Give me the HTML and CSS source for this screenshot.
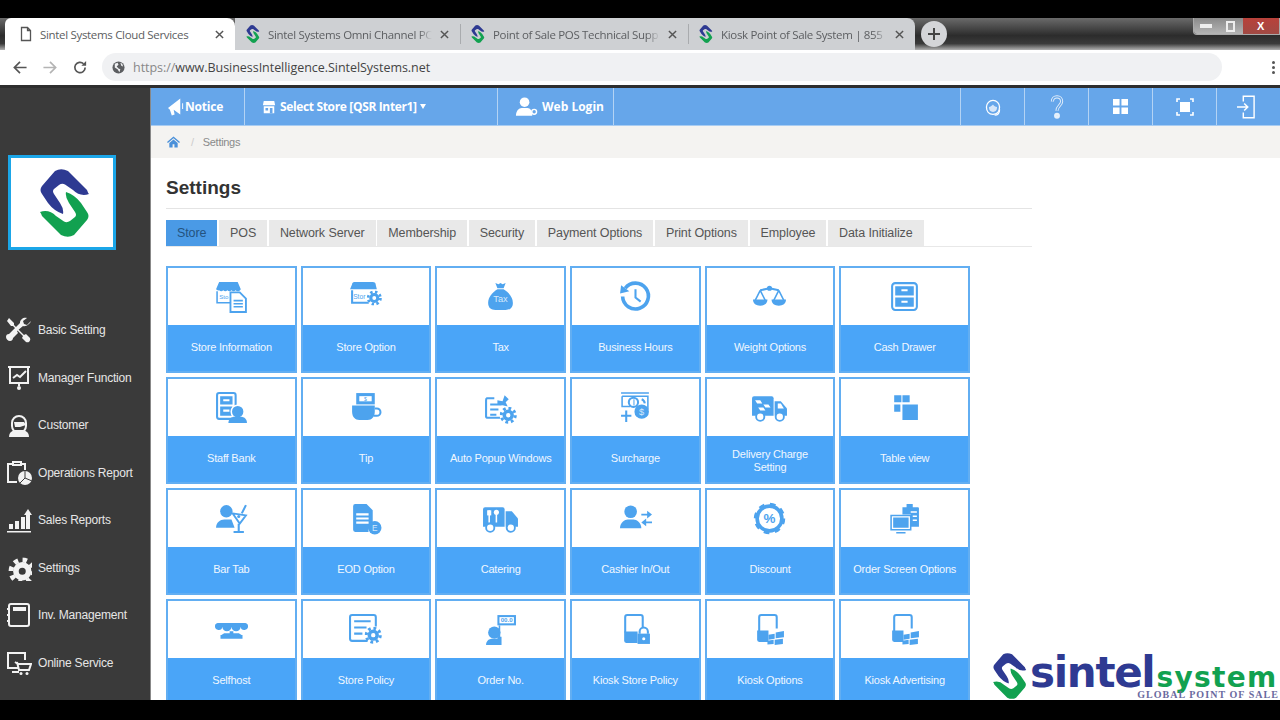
FILE: index.html
```html
<!DOCTYPE html>
<html lang="en">
<head>
    <meta charset="UTF-8">
    <meta name="viewport" content="width=device-width, initial-scale=1.0">
    <title>Sintel Systems Cloud Services</title>
    <link rel="stylesheet" href="styles.css">
</head>
<body>
    <svg class="sprite" xmlns="http://www.w3.org/2000/svg">
        <symbol id="s-mark" viewBox="0 0 50 68">
            <path fill="#2e3a92" d="M15 2Q21-1.500 28 2L47 21Q48 24 49 25 40 28 33 21L25 15.500Q22 14 19 16L14 20Q12 22 14 25L20 34Q24 40 23 45 14 42 8 34L2 25Q-1 21 2 17Z"/>
            <path fill="#12a150" d="M34 66Q28 69.500 21 66L2 47Q1 44 0 43 9 40 16 47L24 52.500Q27 54 30 52L35 48Q37 46 35 43L29 34Q25 28 26 23 35 26 41 34L47 43Q50 47 47 51Z"/>
        </symbol>
        <symbol id="gear" viewBox="0 0 20 20">
            <circle class="gear-core" cx="10" cy="10" r="4.500"/>
            <circle class="gear-teeth" cx="10" cy="10" r="8"/>
        </symbol>
        <symbol id="windows-phone" viewBox="0 0 32 32">
            <path class="ln" d="M6 18V4a2 2 0 0 1 2-2h13a2 2 0 0 1 2 2v11"/>
            <path d="M4 17h11v11H6a2 2 0 0 1-2-2z"/>
            <path d="M15 21l6-1v5l-6 1zM22 19l8-1.500v6l-8 1zM14 27l6-1v4l-6 .5zM21 26l8-1v5l-8 1z"/>
        </symbol>
    </svg>

    <div class="topbar"></div>

    <div class="tabstrip">
        <div class="tab tab-active">
            <svg class="tab-icon" viewBox="0 0 14 16"><path class="doc-ln" d="M2.500 1.500h6l3 3v10h-9zM8.500 1.500v3h3"/></svg>
            <span class="tab-title">Sintel Systems Cloud Services</span>
            <svg class="tab-close" viewBox="0 0 10 10"><path d="M1 1l8 8M9 1l-8 8"/></svg>
        </div>
        <div class="tab">
            <svg class="tab-icon"><use href="#s-mark"/></svg>
            <span class="tab-title">Sintel Systems Omni Channel PC</span>
            <svg class="tab-close" viewBox="0 0 10 10"><path d="M1 1l8 8M9 1l-8 8"/></svg>
        </div>
        <div class="tab tab-sep">
            <svg class="tab-icon"><use href="#s-mark"/></svg>
            <span class="tab-title">Point of Sale POS Technical Supp</span>
            <svg class="tab-close" viewBox="0 0 10 10"><path d="M1 1l8 8M9 1l-8 8"/></svg>
        </div>
        <div class="tab tab-sep">
            <svg class="tab-icon"><use href="#s-mark"/></svg>
            <span class="tab-title">Kiosk Point of Sale System | 855</span>
            <svg class="tab-close" viewBox="0 0 10 10"><path d="M1 1l8 8M9 1l-8 8"/></svg>
        </div>
        <div class="newtab">
            <svg viewBox="0 0 12 12"><path d="M6 0v12M0 6h12"/></svg>
        </div>
        <div class="winctl">
            <span class="win-btn"><i class="win-min"></i></span>
            <span class="win-btn"><i class="win-max"></i></span>
            <span class="win-btn win-close">X</span>
        </div>
    </div>

    <div class="toolbar">
        <svg class="tool-btn" viewBox="0 0 16 16"><path d="M15 8H2M8 2L2 8l6 6"/></svg>
        <svg class="tool-btn tool-off" viewBox="0 0 16 16"><path d="M1 8h13M8 2l6 6-6 6"/></svg>
        <svg class="tool-btn" viewBox="0 0 16 16"><path d="M13.500 8a5.500 5.500 0 1 1-1.700-4"/><path class="tool-fill" d="M14.500 1v5h-5z"/></svg>
        <div class="omnibox">
            <svg class="globe" viewBox="0 0 14 14"><circle cx="7" cy="7" r="6.500"/><path fill="#f0f1f3" d="M3 3l3-1 1 2-2 2 2 2 2 1-1 3-2-3-3-2zM9 2l2 1 1 3-2-1z"/></svg>
            <span class="url"><span class="url-scheme">https://</span>www.BusinessIntelligence.SintelSystems.net</span>
        </div>
        <div class="kebab"><i></i><i></i><i></i></div>
    </div>

    <div class="app">
        <aside class="sidebar">
            <div class="side-logo"><svg><use href="#s-mark"/></svg></div>
            <ul class="side-menu">
                <li>
                    <svg viewBox="0 0 26 26"><path d="M3 1l5 5 0 2 10 10 2-1 4 4a3 3 0 0 1-4 4l-4-4 1-2L7 9H5L1 4z"/><path d="M25 4l-4 4-3-1-1-3 4-3c-3-1-7 1-7 5l-11 11c-2 0-3 1-3 3s2 4 4 4 3-2 3-3l5-5-1-2 6-5c3 1 7-2 8-5z"/></svg>
                    <span>Basic Setting</span>
                </li>
                <li>
                    <svg viewBox="0 0 26 26"><path class="ln" d="M2 2h22M4 2v16h18V2M13 18v3"/><circle cx="13" cy="23" r="2"/><path class="ln" d="M7 13l4-3 3 2 6-6"/></svg>
                    <span>Manager Function</span>
                </li>
                <li>
                    <svg viewBox="0 0 26 26"><path class="ln" d="M6 11a7 7 0 0 1 14 0v3a7 7 0 0 1-14 0z"/><path d="M8 10h10l2 3-6 2H9z"/><path d="M3 25c0-5 4-7 7-7h6c3 0 7 2 7 7z"/></svg>
                    <span>Customer</span>
                </li>
                <li>
                    <svg viewBox="0 0 26 26"><path class="ln" d="M7 4H2v18h9M15 4h4v6"/><path class="ln" d="M7 5V2h8v3z"/><circle cx="19" cy="18" r="7"/><path class="pie-cut" d="M19 18v-8M19 18l7 3M19 18l-5 5"/></svg>
                    <span>Operations Report</span>
                </li>
                <li>
                    <svg viewBox="0 0 26 26"><path d="M3 17h4v5H3zM9 14h4v8H9zM15 10h4v12h-4zM22 2l-4 6h8z"/><path d="M20 8h4v14h-4z"/><rect x="1" y="24" width="24" height="1.500"/></svg>
                    <span>Sales Reports</span>
                </li>
                <li>
                    <svg viewBox="0 0 24 24"><svg x="2" y="2" width="20" height="20" viewBox="0 0 20 20"><use href="#gear"/></svg></svg>
                    <span>Settings</span>
                </li>
                <li>
                    <svg viewBox="0 0 26 26"><rect class="ln" x="3" y="2" width="20" height="22" rx="2"/><rect x="7" y="5" width="13" height="4"/><path class="ln" d="M1 7h3M1 13h3M1 19h3"/></svg>
                    <span>Inv. Management</span>
                </li>
                <li>
                    <svg viewBox="0 0 26 26"><path class="ln" d="M12 18H2V3h17v7M6 22h7"/><path class="ln" d="M9 12l3 2h13l-2 6H13l-2-8"/><circle cx="15" cy="23.500" r="1.500"/><circle cx="21" cy="23.500" r="1.500"/></svg>
                    <span>Online Service</span>
                </li>
            </ul>
        </aside>

        <main class="main">
            <nav class="topnav">
                <a class="nav-item nav-notice">
                    <svg viewBox="0 0 18 20"><path d="M0 11L13 1v17L6 13l1 5-3 1-2-6z"/><path d="M15 6v6h1V6z"/></svg>
                    <span>Notice</span>
                </a>
                <a class="nav-item nav-store">
                    <svg viewBox="0 0 16 16"><path d="M2 1h12l1 5H1zM2 7h12v8H2z"/><path class="nav-cut" d="M4 9h3v3H4zM9 9h3v6H9z"/></svg>
                    <span>Select Store [QSR Inter1]</span>
                    <i class="caret"></i>
                </a>
                <a class="nav-item nav-login">
                    <svg viewBox="0 0 24 20"><circle cx="10" cy="5" r="5"/><path d="M1 19c0-5 3-8 6-8h6c3 0 5 3 5 8z"/><circle class="nav-ring" cx="20" cy="15" r="2.500"/></svg>
                    <span>Web Login</span>
                </a>
                <div class="nav-right">
                    <a class="nav-icon"><svg viewBox="0 0 22 26"><path class="nav-ln" d="M3 13a8 8 0 1 1 16 0c0 5-3 9-8 9s-8-4-8-9z"/><path d="M6 13c2 0 4-2 5-3 1 2 3 3 5 3 0 4-2 6-5 6s-5-2-5-6z" class="nav-soft"/><path class="nav-ln" d="M19 16c0 6-3 7-6 7"/></svg></a>
                    <a class="nav-icon"><svg viewBox="0 0 16 26"><path class="nav-q" d="M3 7c0-3 2-5 5-5s5 2 5 5c0 4-5 5-5 10"/><circle class="nav-q" cx="8" cy="22.500" r="1.500"/><path class="nav-q-in" d="M3 7c0-3 2-5 5-5s5 2 5 5c0 4-5 5-5 10"/></svg></a>
                    <a class="nav-icon nav-grid"><svg viewBox="0 0 16 16"><path d="M0 0h7v7H0zM9 0h7v7H9zM0 9h7v7H0zM9 9h7v7H9z"/></svg></a>
                    <a class="nav-icon"><svg viewBox="0 0 18 18"><path class="nav-ln" d="M1 4V1h3M14 1h3v3M17 14v3h-3M4 17H1v-3"/><rect x="4" y="4" width="10" height="10"/></svg></a>
                    <a class="nav-icon"><svg viewBox="0 0 20 26"><path class="nav-ln" d="M7 7V1h12v24H7v-6"/><path class="nav-ln" d="M0 13h12M8 9l4 4-4 4"/></svg></a>
                </div>
            </nav>

            <div class="breadcrumb">
                <svg class="crumb-home" viewBox="0 0 14 12"><path d="M7 0l7 6-1 1-6-5-6 5-1-1zM2.500 7L7 3.200 11.500 7v5H8V8.500H6V12H2.500z"/></svg>
                <span class="crumb-sep">/</span>
                <span class="crumb-page">Settings</span>
            </div>

            <section class="content">
                <h1 class="page-title">Settings</h1>
                <ul class="tabs">
                    <li class="active">Store</li>
                    <li>POS</li>
                    <li>Network Server</li>
                    <li>Membership</li>
                    <li>Security</li>
                    <li>Payment Options</li>
                    <li>Print Options</li>
                    <li>Employee</li>
                    <li>Data Initialize</li>
                </ul>

                <div class="tile-grid">
                    <a class="tile">
                        <div class="tile-top"><svg viewBox="0 0 32 32"><path d="M4 2h18l3 7a3 3 0 0 1-5 1 3 3 0 0 1-4 0 3 3 0 0 1-4 0 3 3 0 0 1-4 0 3 3 0 0 1-4 0 3 3 0 0 1-3-1z"/><path class="ln thin" d="M2 11v11h14"/><text x="4" y="18" class="icon-text" font-size="6">Sto</text><path class="cut-ln" d="M15 12h9l6 6v13H15z"/><path class="ln thin" d="M18 20h9M18 23h9M18 26h9"/></svg></div>
                        <div class="tile-label">Store Information</div>
                    </a>
                    <a class="tile">
                        <div class="tile-top"><svg viewBox="0 0 32 32"><path d="M3 4c0-1 1-2 2-2h18c2 0 3 1 3 3l1 4H1z"/><path class="ln" d="M3 10v12h18"/><text x="4" y="18" class="icon-text" font-size="6.500">Stor</text><svg x="17" y="10" width="15" height="15" viewBox="0 0 20 20"><circle cx="10" cy="10" r="10" fill="#fff"/><use href="#gear"/></svg></svg></div>
                        <div class="tile-label">Store Option</div>
                    </a>
                    <a class="tile">
                        <div class="tile-top"><svg viewBox="0 0 32 32"><path d="M11 3l3 1 2-1 2 1 3-1-2 5h-6z"/><path d="M13 9h6c5 3 9 8 9 13 0 5-3 7-7 7H11c-4 0-7-2-7-7 0-5 4-10 9-13z"/><text x="16" y="21" class="icon-text cut-text" text-anchor="middle" font-size="9">Tax</text></svg></div>
                        <div class="tile-label">Tax</div>
                    </a>
                    <a class="tile">
                        <div class="tile-top"><svg viewBox="0 0 32 32"><path class="ln thick" d="M6 8A12.500 12.500 0 1 1 3.500 16"/><path d="M2 5l8 6-9 2z"/><path class="ln" d="M16 9v8l5 4"/></svg></div>
                        <div class="tile-label">Business Hours</div>
                    </a>
                    <a class="tile">
                        <div class="tile-top"><svg viewBox="0 0 32 32"><circle cx="16" cy="8" r="2.500"/><path class="ln" d="M7 10l9-2 9 2"/><path class="ln thin" d="M7 10l-5 10M7 10l5 10M25 10l-5 10M25 10l5 10"/><path d="M0 19h14c0 4-3 6-7 6s-7-2-7-6zM18 19h14c0 4-3 6-7 6s-7-2-7-6z"/></svg></div>
                        <div class="tile-label">Weight Options</div>
                    </a>
                    <a class="tile">
                        <div class="tile-top"><svg viewBox="0 0 32 32"><rect class="ln" x="4" y="3" width="24" height="26" rx="3"/><path d="M7 6h18v9H7zM7 17h18v9H7z"/><path fill="#fff" d="M13 9h6v2h-6zM13 20h6v2h-6z"/></svg></div>
                        <div class="tile-label">Cash Drawer</div>
                    </a>

                    <a class="tile">
                        <div class="tile-top"><svg viewBox="0 0 32 32"><rect class="ln" x="2" y="2" width="18" height="25" rx="2"/><path d="M5 5h12v8H5zM5 15h12v9H5z"/><path fill="#fff" d="M8 8h6v2H8zM8 18h6v2H8z"/><circle fill="#fff" cx="22" cy="20" r="7"/><circle cx="22" cy="20" r="5.500"/><path d="M13 31c0-4 3-6 6-6h6c3 0 6 2 6 6z"/></svg></div>
                        <div class="tile-label">Staff Bank</div>
                    </a>
                    <a class="tile">
                        <div class="tile-top"><svg viewBox="0 0 32 32"><path d="M7 2h18v11H7z"/><rect fill="#fff" x="10" y="5" width="12" height="5"/><text x="16" y="9.500" class="icon-text" text-anchor="middle" font-size="5">$</text><path d="M3 14h22v6c0 5-3 8-7 8h-8c-4 0-7-3-7-8z"/><path class="ln" d="M25 17h2a3 3 0 0 1 0 7h-3"/></svg></div>
                        <div class="tile-label">Tip</div>
                    </a>
                    <a class="tile">
                        <div class="tile-top"><svg viewBox="0 0 32 32"><path class="ln" d="M10 7H3a2 2 0 0 0-1 2v16a2 2 0 0 0 1 1h14"/><path class="ln" d="M6 13h11M6 18h8M6 23h6"/><path d="M13 9l5 1 2-6 4 4-3 3 2 4-4-1-6-1z"/><svg x="15" y="15" width="17" height="17" viewBox="0 0 20 20"><circle cx="10" cy="10" r="10" fill="#fff"/><use href="#gear"/></svg></svg></div>
                        <div class="tile-label">Auto Popup Windows</div>
                    </a>
                    <a class="tile">
                        <div class="tile-top"><svg viewBox="0 0 32 32"><path class="ln thin" d="M2 2h27M3 5h25v13"/><path class="ln thin" d="M3 5v10h8"/><circle class="ln" cx="14" cy="11" r="4.500"/><path d="M14 8v6h1V8z"/><path class="ln" d="M22 8a5 5 0 0 1 3 4"/><circle cx="22" cy="20" r="7"/><text x="22" y="23.500" class="icon-text cut-text" text-anchor="middle" font-size="9">$</text><path d="M2 23h4v-4h2v4h4v2H8v5H6v-5H2z"/></svg></div>
                        <div class="tile-label">Surcharge</div>
                    </a>
                    <a class="tile">
                        <div class="tile-top"><svg class="wide" viewBox="0 0 36 32"><path d="M1 7a2 2 0 0 1 2-2h17a2 2 0 0 1 2 2v17H1z"/><path d="M23 10h6l6 7v7H23z"/><path fill="#fff" d="M26 12h3l3 5h-6z"/><circle class="cut-ln" cx="9" cy="25" r="4"/><circle class="cut-ln" cx="28" cy="25" r="4"/><path fill="#fff" d="M4 9h5l2 3H6zM12 13h5l2 3h-5zM7 16h5l2 3H9z"/></svg></div>
                        <div class="tile-label tile-label-wrap">Delivery Charge<br>Setting</div>
                    </a>
                    <a class="tile">
                        <div class="tile-top"><svg viewBox="0 0 32 32"><path d="M6 4h7v7H6zM14 4h7v7h-7zM6 13h6v7H6zM14 13h15v15H14z"/></svg></div>
                        <div class="tile-label">Table view</div>
                    </a>

                    <a class="tile">
                        <div class="tile-top"><svg viewBox="0 0 32 32"><circle cx="11" cy="9" r="6"/><path d="M1 25c0-5 4-8 8-8h7l3 8z"/><path class="cut-ln" d="M17 11l13 2-6 8z"/><path class="ln" d="M23 21v8M18 29h10M26 11l4-8"/><circle cx="23" cy="14" r="1.500"/></svg></div>
                        <div class="tile-label">Bar Tab</div>
                    </a>
                    <a class="tile">
                        <div class="tile-top"><svg viewBox="0 0 32 32"><path d="M4 4a2 2 0 0 1 2-2h11l6 6v14a6 6 0 0 0-4 7H6a2 2 0 0 1-2-2z"/><path fill="#fff" d="M7 11h12v2H7zM7 15h12v2H7zM7 19h12v2H7z"/><circle cx="25" cy="25" r="6.500"/><text x="25" y="28" class="icon-text cut-text" text-anchor="middle" font-size="8">E</text></svg></div>
                        <div class="tile-label">EOD Option</div>
                    </a>
                    <a class="tile">
                        <div class="tile-top"><svg class="wide" viewBox="0 0 36 32"><path d="M1 7a2 2 0 0 1 2-2h17a2 2 0 0 1 2 2v17H1z"/><path d="M23 9h6l6 7v8H23z"/><path class="cut-stroke" d="M7 8v12M14 12v8"/><rect fill="#fff" x="5" y="8" width="4" height="5"/><circle fill="#fff" cx="14" cy="10" r="2.500"/><circle class="cut-ln" cx="8" cy="25" r="4"/><circle class="cut-ln" cx="28" cy="25" r="4"/></svg></div>
                        <div class="tile-label">Catering</div>
                    </a>
                    <a class="tile">
                        <div class="tile-top"><svg viewBox="0 0 34 32"><circle cx="12" cy="9" r="6.500"/><path d="M1 26c0-6 5-9 8-9h6c3 0 8 3 8 9z"/><path d="M23 11h6V8l5 4-5 4v-3h-6zM34 19h-6v-3l-5 4 5 4v-3h6z"/></svg></div>
                        <div class="tile-label">Cashier In/Out</div>
                    </a>
                    <a class="tile">
                        <div class="tile-top"><svg viewBox="0 0 32 32"><circle class="ln thick" cx="16" cy="16" r="12"/><circle class="badge-teeth" cx="16" cy="16" r="14"/><text x="16" y="20.500" class="icon-text" text-anchor="middle" font-size="13" font-weight="700">%</text></svg></div>
                        <div class="tile-label">Discount</div>
                    </a>
                    <a class="tile">
                        <div class="tile-top"><svg viewBox="0 0 32 32"><path d="M14 5h4V2h6v3h5a1 1 0 0 1 1 1v18h-8V12H14z"/><path fill="#fff" d="M22 9h6v1.500h-6zM24 13h4v1.500h-4zM24 17h4v1.500h-4z"/><path class="ln thin" d="M3 13h19v14H3z"/><path d="M5 15h15v10H5zM8 29h9v1.500H8z"/></svg></div>
                        <div class="tile-label">Order Screen Options</div>
                    </a>

                    <a class="tile">
                        <div class="tile-top"><svg viewBox="0 0 36 32"><path d="M3 8h30c1 0 3 1 3 3a4 4 0 0 1-8 1 5 5 0 0 1-10 0 5 5 0 0 1-10 0 4 4 0 0 1-8-1c0-2 2-3 3-3z" transform="translate(0 1)"/><path d="M16 18h4v4h-4zM6 22h24v4H6z"/><path d="M7 22l3-2h16l3 2z"/></svg></div>
                        <div class="tile-label">Selfhost</div>
                    </a>
                    <a class="tile">
                        <div class="tile-top"><svg viewBox="0 0 32 32"><path class="ln" d="M18 27H3a2 2 0 0 1-2-2V4a2 2 0 0 1 2-2h21a2 2 0 0 1 2 2v9"/><path class="ln" d="M5 8h16M5 14h12M5 20h8"/><svg x="15" y="13" width="17" height="17" viewBox="0 0 20 20"><use href="#gear"/></svg></svg></div>
                        <div class="tile-label">Store Policy</div>
                    </a>
                    <a class="tile">
                        <div class="tile-top"><svg viewBox="0 0 32 32"><circle cx="10" cy="19" r="6"/><path d="M2 31c0-4 3-6 6-6h5v-2h4v8z"/><path class="ln thin" d="M15 28V12"/><path d="M13 2h18v10H13z"/><rect fill="#fff" x="15" y="4" width="14" height="6"/><text x="22" y="9.200" class="icon-text" text-anchor="middle" font-size="6" font-weight="700">00.0</text></svg></div>
                        <div class="tile-label">Order No.</div>
                    </a>
                    <a class="tile">
                        <div class="tile-top"><svg viewBox="0 0 32 32"><path class="ln" d="M6 19V4a2 2 0 0 1 2-2h13a2 2 0 0 1 2 2v10"/><path d="M5 18h13v11H7a2 2 0 0 1-2-2z"/><path class="ln" d="M20 20v-2a4 4 0 0 1 8 0v2"/><path d="M18 20h12v10H18z"/><circle fill="#fff" cx="24" cy="25" r="1.500"/></svg></div>
                        <div class="tile-label">Kiosk Store Policy</div>
                    </a>
                    <a class="tile">
                        <div class="tile-top"><svg viewBox="0 0 32 32"><use href="#windows-phone"/></svg></div>
                        <div class="tile-label">Kiosk Options</div>
                    </a>
                    <a class="tile">
                        <div class="tile-top"><svg viewBox="0 0 32 32"><use href="#windows-phone"/></svg></div>
                        <div class="tile-label">Kiosk Advertising</div>
                    </a>
                </div>
            </section>

            <div class="brand">
                <svg class="brand-mark"><use href="#s-mark"/></svg>
                <div class="brand-name">
                    <span class="brand-sintel">sintel</span>
                    <span class="brand-system">system</span>
                </div>
                <div class="brand-sub">GLOBAL POINT OF SALE</div>
            </div>
        </main>
    </div>

    <div class="bottombar"></div>
</body>
</html>
```

FILE: styles.css
```css
* {
    margin: 0;
    padding: 0;
    box-sizing: border-box;
}

html, body {
    height: 720px;
    overflow: hidden;
}

body {
    background-color: #000;
    font-family: "Liberation Sans", Arial, sans-serif;
    width: 1280px;
}

ul {
    list-style: none;
}

.sprite {
    display: none;
}

.ln {
    fill: none;
    stroke: currentColor;
    stroke-width: 2;
}

.ln.thin {
    stroke-width: 1.5;
}

.ln.thick {
    stroke-width: 3.5;
}

.gear-core {
    fill: none;
    stroke: currentColor;
    stroke-width: 4;
}

.gear-teeth {
    fill: none;
    stroke: currentColor;
    stroke-width: 3.5;
    stroke-dasharray: 3.14 3.14;
}

.badge-teeth {
    fill: none;
    stroke: currentColor;
    stroke-width: 2.5;
    stroke-dasharray: 5.5 5.5;
}

.topbar {
    height: 18px;
}

/* browser chrome */
.tabstrip {
    height: 32px;
    display: flex;
    position: relative;
    padding-left: 5px;
    background: linear-gradient(#6a6a6a, #2c2c2c 55%, #3a3a3a 80%, #b0b0b0);
}

.tab {
    width: 225px;
    height: 32px;
    display: flex;
    align-items: center;
    gap: 8px;
    padding: 0 11px;
    background-color: #ced0d3;
    position: relative;
}

.tab-active {
    width: 230px;
    background-color: #fff;
    border-radius: 6px 8px 0 0;
    padding-left: 14px;
    gap: 7px;
}

.tab-sep {
    width: 228px;
}

.tab-sep::before {
    content: "";
    position: absolute;
    left: 0;
    top: 6px;
    height: 20px;
    border-left: 1px solid #a9abae;
}

.tab:nth-child(4) {
    width: 227px;
    border-top-right-radius: 8px;
}

.tab-icon {
    width: 14px;
    height: 18px;
    flex-shrink: 0;
}

.doc-ln {
    fill: none;
    stroke: #555;
    stroke-width: 1.3;
}

.tab-title {
    flex: 1;
    min-width: 0;
    white-space: nowrap;
    font-family: "Open Sans", sans-serif;
    font-size: 11.5px;
    letter-spacing: -0.32px;
    color: #5c5e61;
    -webkit-mask-image: linear-gradient(to right, #000 92%, transparent);
    mask-image: linear-gradient(to right, #000 92%, transparent);
}

.tab-active .tab-title {
    -webkit-mask-image: none;
    mask-image: none;
}

.tab-close {
    width: 9px;
    height: 9px;
    flex-shrink: 0;
    fill: none;
    stroke: #555;
    stroke-width: 1.6;
}

.newtab {
    width: 26px;
    height: 26px;
    margin: 3px 0 0 6px;
    border-radius: 50%;
    background-color: #d4d5d8;
    display: flex;
    align-items: center;
    justify-content: center;
}

.newtab svg {
    width: 12px;
    height: 12px;
    fill: none;
    stroke: #444;
    stroke-width: 2;
}

.winctl {
    position: absolute;
    top: 0;
    right: 0;
    width: 87px;
    height: 17px;
    display: flex;
    border: 1px solid #aaa;
    border-top: none;
    border-radius: 0 0 0 4px;
    overflow: hidden;
}

.win-btn {
    flex: 1;
    background: linear-gradient(#8a8a8a, #b5b5b5);
    display: flex;
    align-items: center;
    justify-content: center;
}

.win-close {
    flex: 1.5;
    background: linear-gradient(#b8413a, #a04a44);
    color: #fff;
    font-size: 11px;
    font-weight: 700;
}

.win-min {
    width: 12px;
    height: 4px;
    background-color: #eee;
}

.win-max {
    width: 9px;
    height: 11px;
    border: 2px solid #eee;
}

.toolbar {
    height: 38px;
    padding: 0 0 1px 5px;
    background-color: #fff;
    border-bottom: 3px solid #2e2e2e;
    display: flex;
    align-items: center;
}

.tool-btn {
    width: 30px;
    height: 15px;
    fill: none;
    stroke: #555;
    stroke-width: 1.8;
}

.tool-off {
    stroke: #b4b4b4;
}

.tool-fill {
    fill: #555;
    stroke: none;
}

.omnibox {
    width: 1120px;
    height: 28px;
    margin-left: 7px;
    padding-left: 10px;
    border-radius: 14px;
    background-color: #f0f1f3;
    display: flex;
    align-items: center;
    gap: 8px;
}

.globe {
    width: 13px;
    height: 13px;
    fill: #5c5e61;
}

.url {
    font-family: "Open Sans", sans-serif;
    font-size: 12.5px;
    color: #444;
    letter-spacing: -0.04px;
}

.url-scheme {
    color: #888;
}

.kebab {
    margin-left: 50px;
    display: flex;
    flex-direction: column;
    gap: 2px;
}

.kebab i {
    width: 3px;
    height: 3px;
    border-radius: 50%;
    background-color: #555;
}

/* app */
.app {
    height: 612px;
    display: flex;
    overflow: hidden;
}

.bottombar {
    height: 20px;
}

.sidebar {
    width: 150px;
    flex-shrink: 0;
    background-color: #3a3a3a;
    padding-top: 67px;
}

.side-logo {
    width: 108px;
    height: 95px;
    margin-left: 8px;
    border: 3px solid #1ba6e8;
    background-color: #fff;
    display: flex;
    align-items: center;
    justify-content: center;
}

.side-logo svg {
    width: 50px;
    height: 68px;
    margin-left: 5px;
}

.side-menu {
    margin-top: 56.5px;
}

.side-menu li {
    height: 47.5px;
    padding-left: 6px;
    display: flex;
    align-items: center;
    gap: 6px;
    font-size: 12px;
    letter-spacing: -0.2px;
    color: #e6e6e6;
}

.side-menu svg {
    width: 26px;
    height: 26px;
    flex-shrink: 0;
    fill: #f2f2f2;
    color: #f2f2f2;
}

.pie-cut {
    fill: none;
    stroke: #3a3a3a;
    stroke-width: 1;
}

.main {
    flex: 1;
    min-width: 0;
    position: relative;
    background-color: #fff;
    border-left: 1px solid #888;
}

.topnav {
    height: 38px;
    background-color: #66a6ea;
    display: flex;
    color: #fff;
    fill: #fff;
    border-bottom: 1px solid #a8ccf2;
    font-family: "Open Sans", sans-serif;
    font-size: 12px;
    font-weight: 700;
}

.nav-item {
    display: flex;
    align-items: center;
    border-right: 1px solid #b4d3f4;
    padding-left: 17px;
}

.nav-notice {
    width: 94px;
    gap: 0;
}

.nav-notice svg {
    width: 17px;
    height: 20px;
}

.nav-notice span {
    letter-spacing: -0.2px;
}

.nav-store {
    width: 253px;
    gap: 4px;
}

.nav-store svg {
    width: 14px;
    height: 14px;
}

.nav-store span {
    letter-spacing: -0.35px;
}

.nav-cut {
    fill: #66a6ea;
}

.caret {
    width: 0;
    height: 0;
    margin-left: -1px;
    border: 3.5px solid transparent;
    border-top: 5px solid #fff;
    border-bottom: none;
}

.nav-login {
    width: 116px;
    gap: 4px;
}

.nav-login svg {
    width: 23px;
    height: 20px;
}

.nav-ring {
    fill: #66a6ea;
    stroke: #fff;
    stroke-width: 1.5;
}

.nav-right {
    margin-left: auto;
    display: flex;
}

.nav-icon {
    width: 64px;
    border-left: 1px solid #b4d3f4;
    display: flex;
    align-items: center;
    justify-content: center;
}

.nav-icon:last-child {
    padding-right: 6px;
}

.nav-icon svg {
    height: 24px;
    width: 18px;
}

.nav-grid svg {
    height: 15px;
    width: 15px;
}

.nav-ln, .nav-q {
    fill: none;
    stroke: #fff;
    stroke-width: 1.6;
}

.nav-q {
    stroke-width: 3.4;
    stroke: #e6f0fb;
}

.nav-q-in {
    fill: none;
    stroke: #66a6ea;
    stroke-width: 1.4;
}

.nav-soft {
    fill: #d6e6f9;
}

.breadcrumb {
    height: 32px;
    padding-left: 16px;
    background-color: #f4f3f1;
    display: flex;
    align-items: center;
    font-size: 11px;
    letter-spacing: -0.3px;
    color: #8a8a8a;
}

.crumb-home {
    width: 13px;
    height: 12px;
    fill: #4a90d9;
}

.crumb-sep {
    margin: 0 9px 0 11px;
    color: #ccc;
}

.content {
    padding: 16px 0 0 15px;
    width: 881px;
}

.page-title {
    height: 35px;
    font-size: 19px;
    font-weight: 700;
    line-height: 28px;
    color: #333;
    border-bottom: 1px solid #e4e4e4;
}

.tabs {
    margin-top: 11px;
    height: 27px;
    display: flex;
    gap: 1.7px;
    border-bottom: 1px solid #e8e8e8;
    font-size: 12.5px;
    letter-spacing: -0.1px;
    color: #555;
}

.tabs li {
    height: 26px;
    padding: 0 11px;
    background-color: #e9e9e9;
    line-height: 26px;
}

.tabs .active {
    background-color: #4a9ae6;
    color: #24537f;
}

.tile-grid {
    margin-top: 19px;
    width: 804px;
    display: grid;
    grid-template-columns: repeat(6, 1fr);
    grid-auto-rows: 107px;
    gap: 4px;
}

.tile {
    display: flex;
    flex-direction: column;
    border: 2px solid #62aef2;
    background-color: #fff;
    color: #4da3ee;
}

.tile-top {
    height: 57px;
    display: flex;
    align-items: center;
    justify-content: center;
}

.tile-top > svg {
    width: 33px;
    height: 33px;
    fill: currentColor;
}

.tile-top > svg.wide {
    width: 37px;
}

.tile-label {
    flex: 1;
    background-color: #4aa5f8;
    color: #f0f7ff;
    font-size: 11px;
    line-height: 13px;
    letter-spacing: -0.2px;
    text-align: center;
    padding-bottom: 1px;
    display: flex;
    align-items: center;
    justify-content: center;
}

.tile-label-wrap {
    padding: 3px 0 0;
}

.icon-text {
    font-family: "Liberation Sans", Arial, sans-serif;
    fill: currentColor;
}

.cut-text {
    fill: #d6e9fb;
}

.cut-ln {
    fill: #fff;
    stroke: currentColor;
    stroke-width: 1.8;
}

.cut-stroke {
    fill: none;
    stroke: #fff;
    stroke-width: 1.5;
}

.brand {
    position: absolute;
    right: 1px;
    bottom: 0;
    width: 288px;
    height: 48px;
    background-color: #fff;
    display: flex;
}

.brand-mark {
    width: 34px;
    height: 46px;
    margin: 1px 0 0 2px;
}

.brand-name {
    margin: 3px 0 0 3px;
    display: flex;
    align-items: baseline;
    font-family: "DejaVu Sans", sans-serif;
    font-weight: 700;
    line-height: 36px;
    height: 36px;
}

.brand-sintel {
    font-size: 42px;
    letter-spacing: -1.3px;
    color: #2e3a92;
}

.brand-system {
    margin-left: 2px;
    font-size: 28px;
    letter-spacing: 1.3px;
    color: #12a150;
}

.brand-sub {
    position: absolute;
    right: 0;
    bottom: 0;
    font-family: "Liberation Serif", serif;
    font-size: 10px;
    font-weight: 700;
    letter-spacing: 1.05px;
    line-height: 10px;
    color: #6a6aa0;
}
```
